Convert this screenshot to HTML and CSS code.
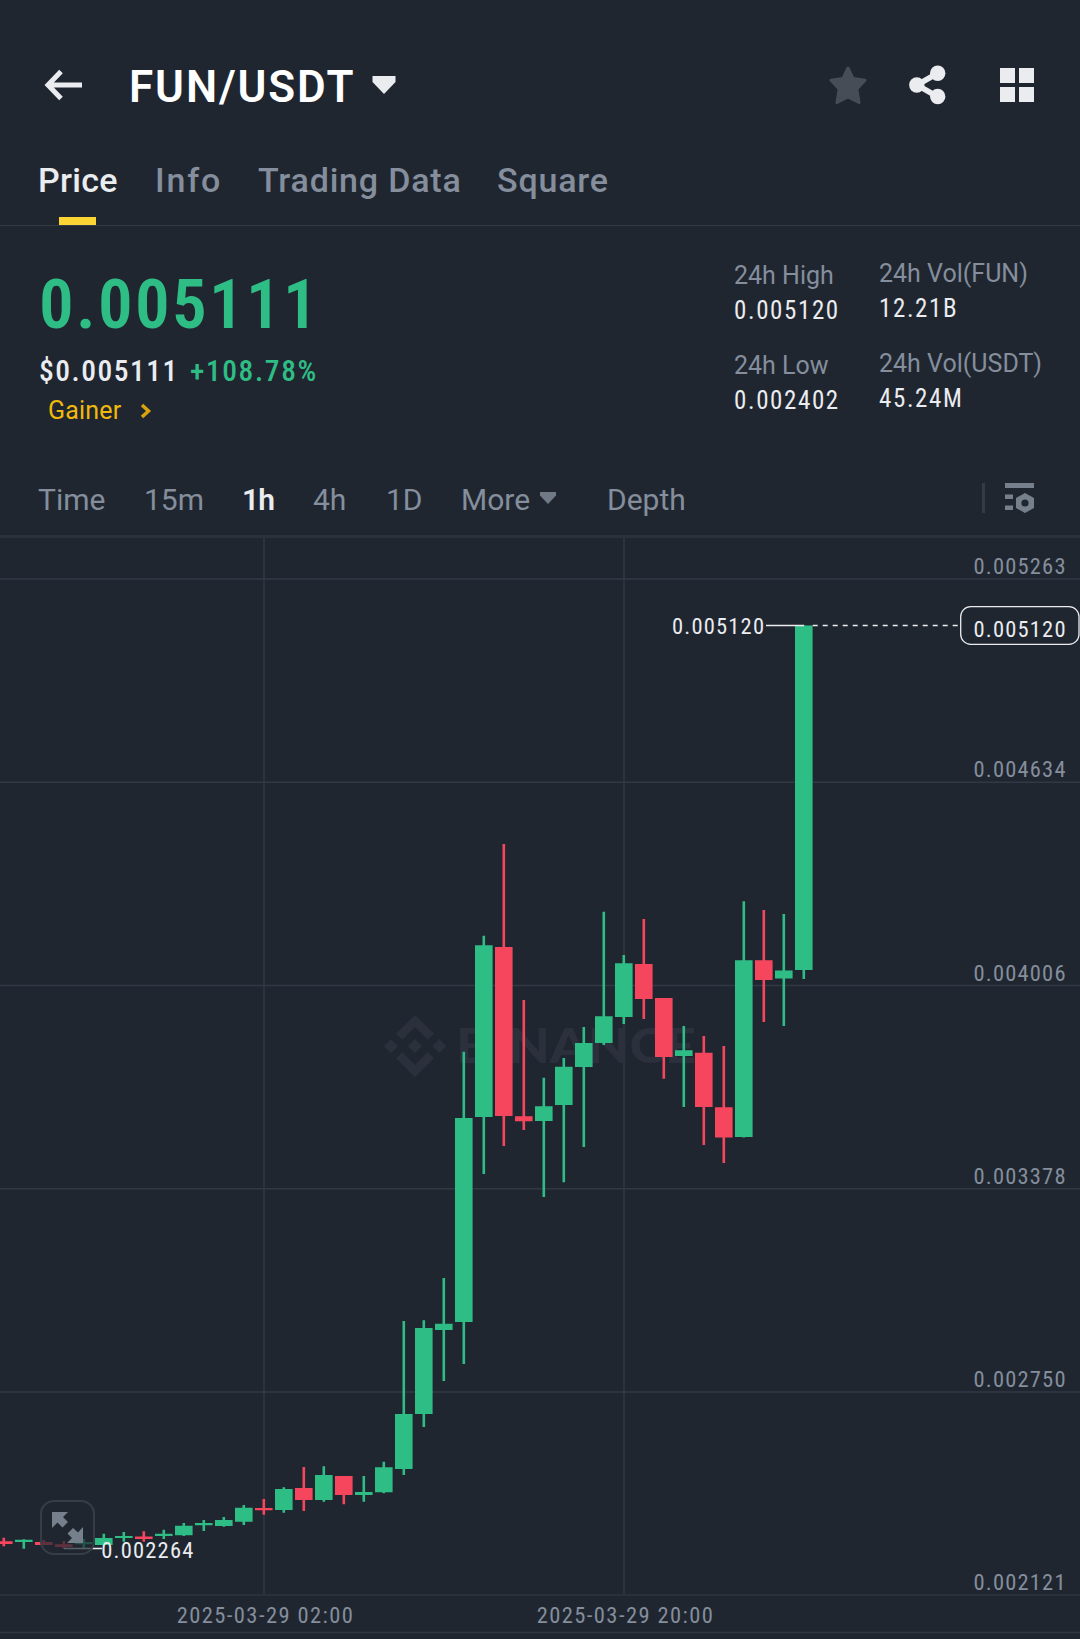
FILE: index.html
```html
<!DOCTYPE html>
<html lang="en">
<head>
  <meta charset="UTF-8">
  <meta name="viewport" content="width=device-width, initial-scale=1.0">
  <title>FUN/USDT</title>
  <link rel="stylesheet" href="styles.css">
</head>
<body>
  <!-- Header -->
  <header class="header">
    <svg class="back" width="38" height="32" viewBox="0 0 38 32">
      <path d="M17 2.500L4 16L17 29.500M4 16H38" fill="none" stroke="#eaecef" stroke-width="5"/>
    </svg>
    <h1 class="pair">FUN/USDT</h1>
    <svg class="pair-caret" width="24" height="18" viewBox="0 0 24 18">
      <path d="M0.500 0H23.500V6L12 18L0.500 6Z" fill="#eaecef"/>
    </svg>
    <div class="actions">
      <svg width="38" height="39" viewBox="0 0 38 39">
        <path d="M19 2L24 12.500L36 14.200L27.800 23L30 36.500L19 31L8 36.500L10.200 23L2 14.200L14 12.500Z" fill="#474d57" stroke="#474d57" stroke-width="3" stroke-linejoin="round"/>
      </svg>
      <svg class="share" width="37" height="40" viewBox="0 0 37 40">
        <path d="M29 8L8 20L29 32" fill="none" stroke="#eaecef" stroke-width="5.500"/>
        <circle cx="28.700" cy="8.300" r="7.700" fill="#eaecef"/>
        <circle cx="7.800" cy="20" r="7.700" fill="#eaecef"/>
        <circle cx="28.700" cy="31.500" r="7.700" fill="#eaecef"/>
      </svg>
      <svg width="34" height="34" viewBox="0 0 34 34">
        <path d="M0 0H15V15H0ZM19 0H34V15H19ZM0 19H15V34H0ZM19 19H34V34H19Z" fill="#eaecef"/>
      </svg>
    </div>
  </header>

  <!-- Tabs -->
  <nav class="tabs">
    <div class="tab active">Price</div>
    <div class="tab">Info</div>
    <div class="tab">Trading Data</div>
    <div class="tab">Square</div>
  </nav>

  <!-- Price and 24h stats -->
  <section class="summary">
    <div class="quote">
      <div class="price">0.005111</div>
      <div class="change"><span class="usd">$0.005111</span><span class="percent">+108.78%</span></div>
      <div class="tag">Gainer
        <svg width="12" height="16" viewBox="0 0 12 16"><path d="M2 2L8.500 8L2 14" fill="none" stroke="#d9a30d" stroke-width="3.500"/></svg>
      </div>
    </div>
    <div class="stats">
      <div class="stats-col">
        <div class="label">24h High</div>
        <div class="value">0.005120</div>
        <div class="label next">24h Low</div>
        <div class="value">0.002402</div>
      </div>
      <div class="stats-col volume">
        <div class="label">24h Vol(FUN)</div>
        <div class="value">12.21B</div>
        <div class="label next">24h Vol(USDT)</div>
        <div class="value">45.24M</div>
      </div>
    </div>
  </section>

  <!-- Intervals -->
  <nav class="intervals">
    <span>Time</span>
    <span>15m</span>
    <span class="selected">1h</span>
    <span>4h</span>
    <span>1D</span>
    <span class="more">More
      <svg width="16" height="12" viewBox="0 0 16 12"><path d="M0 0H16V3.500L8 12L0 3.500Z" fill="#707a86"/></svg>
    </span>
    <span>Depth</span>
    <div class="settings">
      <svg width="30" height="30" viewBox="0 0 30 30">
        <path d="M0 0H29V5H0ZM0 11.500H8V16H0ZM0 22.500H8V27H0Z" fill="#76808c"/>
        <path d="M20 10L29 15V25L20 30L11 25V15ZM20 16.400A3.600 3.600 0 1 0 20 23.600A3.600 3.600 0 1 0 20 16.400Z" fill="#76808c" fill-rule="evenodd"/>
      </svg>
    </div>
  </nav>

  <!-- Candlestick chart -->
  <svg class="chart" width="1080" height="1101" viewBox="0 538 1080 1101">
    <path class="grid" d="M0 579H1080M0 782.300H1080M0 985.500H1080M0 1188.800H1080M0 1392H1080"/>
    <path class="grid" d="M264 538V1595M624 538V1595"/>
    <path class="axis" d="M0 1595H1080"/>
    <path class="bottom-line" d="M0 1632.500H1080"/>

    <!-- Watermark -->
    <g class="watermark">
      <path d="M415 1015L434 1033.700L427.700 1039.700L415 1027L402.300 1039.700L396 1033.700Z"/>
      <path d="M415 1077L434 1058.300L427.700 1052.300L415 1065L402.300 1052.300L396 1058.300Z"/>
      <path d="M391 1039L398 1046L391 1053L384 1046ZM439.300 1039L446.300 1046L439.300 1053L432.300 1046ZM415 1039L422 1046L415 1053L408 1046Z"/>
      <text x="456" y="1063" textLength="240" lengthAdjust="spacingAndGlyphs">BINANCE</text>
    </g>

    <!-- Candles -->
    <g transform="translate(-0.200 0)">
      <path class="wick up" d="M24 1539.300V1548.700M84 1539V1549M104 1533.700V1545M124 1532V1541.700M164 1529.700V1539M184 1523V1536M204 1520V1531M224 1517V1526.700M244 1505V1525M284 1487.300V1512.700M324 1466.300V1501.700M364 1476V1501.700M384 1461.700V1493.300M404 1321V1475M424 1320.300V1427M444 1278V1381M464 1051.700V1364M484 935.700V1174M544 1077.700V1197M564 1058V1182.300M584 1027V1147M604 911.700V1045M624 955V1024M684 1026V1107M744 901.300V1137.500M784 914V1026M804 625.300V979"/>
      <path class="body up" d="M24 1539.700V1542M84 1542V1544.300M104 1538V1545M124 1536V1538M164 1533.700V1536M184 1525.700V1535.300M204 1523V1525.300M224 1520V1526M244 1507.700V1521.700M284 1489V1510M324 1475V1500M364 1492V1495M384 1467.300V1492.300M404 1414V1469M424 1328V1414M444 1323.700V1330M464 1118V1322M484 945.300V1117M544 1106.300V1121M564 1066.700V1105M584 1043V1067M604 1016.300V1043M624 963.300V1017M684 1050.300V1056M744 960.300V1137M784 970.500V978.500M804 625.500V970"/>
      <path class="wick down" d="M4 1537.700V1546.300M44 1540V1545M64 1541V1548.700M144 1531.300V1541.700M264 1499V1514.700M304 1467V1511M344 1476V1504.300M504 844V1146M524 1000V1130M644 919V1019M664 998V1078.700M704 1036V1145M724 1046V1163M764 910V1022"/>
      <path class="body down" d="M4 1541.300V1544M44 1542V1545M64 1544.300V1547M144 1536.500V1539M264 1508V1510.300M304 1488V1500M344 1476V1495M504 947V1116M524 1116.300V1121.300M644 964V999M664 998V1057M704 1052.800V1107M724 1107.200V1137.500M764 960.300V980"/>
    </g>

    <!-- High and low markers -->
    <path class="marker" d="M766 625.500H804M64 1548.500H102"/>
    <path class="marker" stroke-dasharray="5 5" d="M812.700 625.500H960"/>
    <text class="mark" x="672" y="633.500" textLength="92">0.005120</text>
    <text class="mark" x="101.300" y="1557.500" textLength="92">0.002264</text>

    <!-- Price axis -->
    <text x="973.500" y="573.800" textLength="92">0.005263</text>
    <text x="973.500" y="777" textLength="92">0.004634</text>
    <text x="973.500" y="981" textLength="92">0.004006</text>
    <text x="973.500" y="1184" textLength="92">0.003378</text>
    <text x="973.500" y="1387" textLength="92">0.002750</text>
    <text x="973.500" y="1590" textLength="92">0.002121</text>
    <rect class="last-box" x="960.700" y="606.700" width="118.300" height="37.600" rx="10"/>
    <text class="mark" x="973.500" y="636.600" textLength="92">0.005120</text>

    <!-- Time axis -->
    <text x="176.800" y="1622.500" textLength="176">2025-03-29 02:00</text>
    <text x="536.800" y="1622.500" textLength="176">2025-03-29 20:00</text>

    <!-- Fullscreen button -->
    <rect class="expand" x="41" y="1501" width="53" height="53" rx="13"/>
    <path d="M52 1512H68L63 1517L68 1522L62.500 1527.500L57.500 1522.500L52 1528Z" fill="#76808c"/>
    <path d="M83 1543H67L72 1538L67.500 1533.500L73 1528L78 1532.500L83 1527Z" fill="#76808c"/>
  </svg>
</body>
</html>
```

FILE: styles.css
```css
/* General */
body {
  margin: 0;
  background: #202630;
  color: #eaecef;
  font-family: Roboto, 'Liberation Sans', sans-serif;
  width: 1080px;
  overflow: hidden;
}

svg {
  display: block;
  flex-shrink: 0;
}

/* Header */
.header {
  display: flex;
  align-items: center;
  height: 123px;
  padding: 25px 46px 0 44px;
}

.back {
  margin-top: -3px;
}

.pair {
  margin: 1px 0 0 47px;
  width: 230px;
  font-size: 44px;
  font-weight: 600;
  letter-spacing: 1.9px;
  color: #fff;
}

.pair-caret {
  margin-left: 13px;
  margin-top: -3px;
}

.actions {
  display: flex;
  align-items: center;
  margin-left: auto;
  margin-top: -3px;
}

.share {
  margin: 0 54px 0 42px;
}

/* Tabs */
.tabs {
  display: grid;
  grid-template-columns: 117px 103px 239px auto;
  justify-content: start;
  height: 77px;
  padding-left: 38px;
  border-bottom: 1px solid #333b47;
}

.tab {
  justify-self: start;
  font-size: 34px;
  font-weight: 500;
  line-height: 64px;
  letter-spacing: 0.8px;
  color: #848e9c;
}

.tab.active {
  color: #eaecef;
  letter-spacing: 0.3px;
}

.tab:nth-child(2) {
  letter-spacing: 1.8px;
}

.tab.active::after {
  content: "";
  display: block;
  width: 37px;
  height: 8px;
  margin: 5px auto 0;
  background: #fcd535;
}

/* Price and 24h stats */
.summary {
  display: flex;
  justify-content: space-between;
  height: 237px;
}

.quote {
  padding: 43px 0 0 39px;
}

.price {
  font-size: 69px;
  font-weight: 600;
  font-stretch: condensed;
  line-height: 71px;
  letter-spacing: 2.3px;
  color: #2ebd85;
}

.change {
  display: flex;
  margin-top: 11px;
  font-size: 29.5px;
  font-weight: 500;
  font-stretch: condensed;
  line-height: 40px;
}

.usd {
  width: 151px;
  letter-spacing: 1.5px;
}

.percent {
  color: #2ebd85;
  letter-spacing: 1.6px;
}

.tag {
  display: flex;
  align-items: center;
  gap: 19px;
  padding-left: 9px;
  font-size: 25px;
  line-height: 40px;
  letter-spacing: 0.2px;
  color: #f0b90b;
}

.stats {
  display: flex;
  width: 346px;
  padding-top: 32px;
  font-size: 25px;
  line-height: 35px;
}

.stats-col {
  width: 145px;
}

.volume {
  width: 170px;
  margin-top: -2px;
}

.label {
  color: #848e9c;
  white-space: nowrap;
}

.value {
  font-stretch: condensed;
  letter-spacing: 1.6px;
}

.next {
  margin-top: 20px;
}

/* Intervals */
.intervals {
  display: grid;
  grid-template-columns: 106px 98px 71px 73px 75px 146px 1fr auto;
  align-items: center;
  height: 72px;
  padding: 0 45px 0 38px;
  border-bottom: 3px solid #2b313c;
  font-size: 30px;
  color: #848e9c;
}

.selected {
  color: #eaecef;
  font-weight: 600;
  letter-spacing: -0.8px;
}

.more {
  display: flex;
  align-items: center;
  gap: 10px;
}

.more svg {
  margin-top: -3px;
}

.settings {
  margin-top: -2px;
  padding-left: 20px;
  border-left: 3px solid #333b47;
}

/* Chart */
.chart text {
  font-size: 22.5px;
  font-stretch: condensed;
  fill: #848e9c;
}

.chart .mark {
  fill: #eaecef;
}

.grid,
.bottom-line {
  stroke: #323945;
  stroke-width: 1.4;
}

.axis {
  stroke: #2b313c;
  stroke-width: 2;
}

.watermark {
  fill: #2b303c;
}

.chart .watermark text {
  font-family: Lato, sans-serif;
  font-size: 47px;
  font-weight: 900;
  fill: #2b303c;
}

.wick {
  stroke-width: 2.6;
}

.body {
  stroke-width: 17.6;
}

.up {
  stroke: #2ebd85;
}

.down {
  stroke: #f6465d;
}

.marker {
  stroke: #eaecef;
  stroke-width: 1.3;
}

.last-box {
  fill: #202630;
  stroke: #eaecef;
  stroke-width: 1.3;
}

.expand {
  fill: #202630;
  fill-opacity: 0.7;
  stroke: #363c48;
  stroke-width: 2;
}
```
